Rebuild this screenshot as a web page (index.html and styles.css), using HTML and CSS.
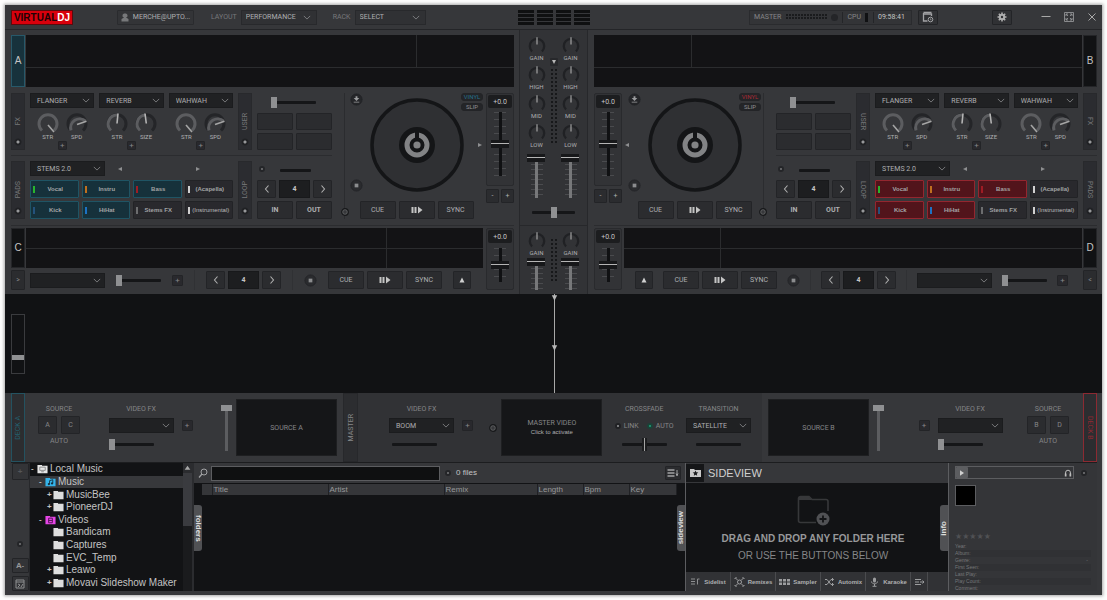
FILE: index.html
```html
<!DOCTYPE html>
<html lang="en">
<head>
<meta charset="utf-8">
<title>VirtualDJ</title>
<link rel="stylesheet" href="styles.css">
</head>
<body>
<svg class="defs" aria-hidden="true">
  <symbol id="chev" viewBox="0 0 10 6"><path d="M1 1l4 4 4-4" fill="none" stroke="#8d8e90" stroke-width="1"/></symbol>
  <symbol id="left" viewBox="0 0 6 10"><path d="M4.500 1.500L1.500 5l3 3.500" fill="none" stroke="#b0b0b0" stroke-width="1.100"/></symbol>
  <symbol id="right" viewBox="0 0 6 10"><path d="M1.500 1.500L4.500 5l-3 3.500" fill="none" stroke="#b0b0b0" stroke-width="1.100"/></symbol>
  <symbol id="play" viewBox="0 0 12 8"><path d="M0.500 1h2v6h-2zM3.500 1h2v6h-2zM7 0.500L11.500 4 7 7.500z" fill="#c4c4c4"/></symbol>
  <symbol id="up" viewBox="0 0 8 8"><path d="M4 1.500L6.500 6.500h-5z" fill="#d0d0d0"/></symbol>
  <symbol id="tri-l" viewBox="0 0 6 6"><path d="M5 1v4L1 3z" fill="#8e8f91"/></symbol>
  <symbol id="tri-r" viewBox="0 0 6 6"><path d="M1 1v4l4-2z" fill="#8e8f91"/></symbol>
  <symbol id="tri-d" viewBox="0 0 6 6"><path d="M1 1h4L3 5z" fill="#b8b8b8"/></symbol>
  <symbol id="stop" viewBox="0 0 14 14"><circle cx="7" cy="7" r="6" fill="#2a2b2e" stroke="#242528"/><path d="M5 5h4v4H5z" fill="#8b8c8e"/></symbol>
  <symbol id="load" viewBox="0 0 14 14"><circle cx="7" cy="7" r="6" fill="#252629" stroke="#222326"/><path d="M6 3.500h2v2h2L7 8.500 4 5.500h2zM4 9.300h6v1H4z" fill="#9b9c9e"/></symbol>
  <symbol id="ring" viewBox="0 0 8 8"><circle cx="4" cy="4" r="3" fill="#37383b" stroke="#17181a" stroke-width="1.800"/><circle cx="4" cy="4" r="2.300" fill="none" stroke="#77787a" stroke-width="0.700"/></symbol>
  <symbol id="k-max" viewBox="0 0 24 24"><path d="M6 18.500A9 9 0 1 1 18 18.500" fill="none" stroke="#5c5d60" stroke-width="3"/><path d="M12 13l6 7" stroke="#a5a5a5" stroke-width="1.600"/></symbol>
  <symbol id="k-spd" viewBox="0 0 24 24"><path d="M6 18.500A9 9 0 1 1 18 18.500" fill="none" stroke="#242528" stroke-width="3"/><path d="M6 18.500A9 9 0 0 1 20.600 9.200" fill="none" stroke="#5c5d60" stroke-width="3"/><path d="M12 12.500l9.500-3.200" stroke="#a5a5a5" stroke-width="1.600"/></symbol>
  <symbol id="k-mid" viewBox="0 0 24 24"><path d="M6 18.500A9 9 0 1 1 18 18.500" fill="none" stroke="#242528" stroke-width="3"/><path d="M6 18.500A9 9 0 0 1 12.700 3" fill="none" stroke="#5c5d60" stroke-width="3"/><path d="M12 11.500L13 1.500" stroke="#b5b5b5" stroke-width="1.600"/></symbol>
  <symbol id="k-siz" viewBox="0 0 24 24"><path d="M6 18.500A9 9 0 1 1 18 18.500" fill="none" stroke="#242528" stroke-width="3"/><path d="M6 18.500A9 9 0 0 1 11 3" fill="none" stroke="#5c5d60" stroke-width="3"/><path d="M12.300 11.500L11 1.500" stroke="#b5b5b5" stroke-width="1.600"/></symbol>
  <symbol id="k-mix" viewBox="0 0 20 20"><path d="M4.500 17A8 8 0 1 1 15.500 17" fill="none" stroke="#202124" stroke-width="2.600"/><path d="M10 1.500v8" stroke="#b0b0b0" stroke-width="1.200"/></symbol>
  <symbol id="jog" viewBox="0 0 94 94"><circle cx="47" cy="47" r="45" fill="#2f3033" stroke="#141517" stroke-width="3.500"/><circle cx="47" cy="47" r="18" fill="#141517"/><circle cx="47" cy="47" r="10" fill="none" stroke="#828385" stroke-width="5"/><path d="M45 33h4v9h-4z" fill="#141517"/><circle cx="47" cy="47" r="3.600" fill="#828385"/></symbol>
  <symbol id="folder" viewBox="0 0 12 10"><path d="M0.500 0.500h5v1h6v8h-11z" fill="#dedede"/></symbol>
</svg>

<div class="app">
<header class="top">
  <div class="top-left">
    <div class="logo">VIRTUAL<span>DJ</span></div>
    <button class="user"><svg width="8" height="9" viewBox="0 0 8 9"><path d="M4 0.500a2 2 0 0 1 1 4L7.500 6v2.500h-7V6L3 4.500a2 2 0 0 1 1-4z" fill="#77787a"/></svg>MERCHE@UPTO...</button>
    <label class="dim" for="layout">LAYOUT</label>
    <div class="sel top-sel"><select id="layout"><option>PERFORMANCE</option></select><svg><use href="#chev"/></svg></div>
    <label class="dim" for="rack">RACK</label>
    <div class="sel top-sel rack-sel"><select id="rack"><option>SELECT</option></select><svg><use href="#chev"/></svg></div>
  </div>
  <div class="leds"><i></i><i></i><i></i><i></i></div>
  <div class="top-right">
    <div class="status"><span>MASTER</span><i class="meter"></i><i class="knobdot"></i><i class="bar"></i><span>CPU</span><i class="cpu"></i><i class="bar"></i><time>09:58:41</time></div>
    <button class="tool" aria-label="Recorder"><svg width="12" height="12" viewBox="0 0 12 12"><path d="M1.500 3h8v2M1.500 2v8h4" fill="none" stroke="#a2a3a5" stroke-width="1.300"/><path d="M1.500 1.500h8" stroke="#a2a3a5" stroke-width="1.500"/><circle cx="8.500" cy="8.500" r="2.300" fill="none" stroke="#a2a3a5"/><path d="M8.500 7.500v1.300h1" stroke="#a2a3a5" stroke-width="0.700" fill="none"/></svg></button>
    <button class="tool gear" aria-label="Settings"><svg width="10" height="10" viewBox="0 0 10 10"><path d="M5 0.500v9M0.500 5h9M1.800 1.800l6.400 6.400M8.200 1.800L1.800 8.200" stroke="#adadad" stroke-width="1.600"/><circle cx="5" cy="5" r="3.200" fill="#adadad"/><circle cx="5" cy="5" r="1.200" fill="#303134"/></svg></button>
    <button class="win min" aria-label="Minimize"><svg width="10" height="10" viewBox="0 0 10 10"><path d="M0.500 4.500h9" stroke="#a8a8a8"/></svg></button>
    <button class="win" aria-label="Full screen"><svg width="10" height="10" viewBox="0 0 10 10"><path d="M0.500 0.500h9v9h-9zM2 2l2 2M8 2L6 4M2 8l2-2M8 8L6 6M2 4V2h2M6 2h2v2M2 6v2h2M6 8h2V6" fill="none" stroke="#929395" stroke-width="0.900"/></svg></button>
    <button class="win" aria-label="Close"><svg width="10" height="10" viewBox="0 0 10 10"><path d="M1.500 1.500l7 7M8.500 1.500l-7 7" stroke="#a8a8a8"/></svg></button>
  </div>
</header>

<main class="decks">
<section class="deck deck-l">
  <div class="wave-row"><b class="letter on">A</b><div class="wave wave-a"></div></div>
  <div class="mid">
    <div class="tools">
      <div class="tool-row">
        <div class="tab"><span>FX</span></div>
        <div class="fx-set">
          <div class="fx"><div class="sel"><select aria-label="FX 1"><option>FLANGER</option></select><svg><use href="#chev"/></svg></div><div class="knobs"><div class="knob"><svg><use href="#k-max"/></svg>STR</div><div class="knob"><svg><use href="#k-spd"/></svg>SPD</div></div><button class="plus">+</button></div>
          <div class="fx"><div class="sel"><select aria-label="FX 2"><option>REVERB</option></select><svg><use href="#chev"/></svg></div><div class="knobs"><div class="knob"><svg><use href="#k-mid"/></svg>STR</div><div class="knob"><svg><use href="#k-siz"/></svg>SIZE</div></div><button class="plus">+</button></div>
          <div class="fx"><div class="sel"><select aria-label="FX 3"><option>WAHWAH</option></select><svg><use href="#chev"/></svg></div><div class="knobs"><div class="knob"><svg><use href="#k-max"/></svg>STR</div><div class="knob"><svg><use href="#k-spd"/></svg>SPD</div></div><button class="plus">+</button></div>
        </div>
        <div class="tab"><span>USER</span></div>
        <div class="user-set"><input type="range" class="hr" value="0" aria-label="User slider"><div class="quad"><button aria-label="User 1"></button><button aria-label="User 2"></button><button aria-label="User 3"></button><button aria-label="User 4"></button></div></div>
      </div>
      <div class="tool-row">
        <div class="tab"><span>PADS</span></div>
        <div class="pad-set">
          <div class="pad-head"><div class="sel pad-sel"><select aria-label="Pads page"><option>STEMS 2.0</option></select><svg><use href="#chev"/></svg></div><button class="bare" aria-label="Previous page"><svg><use href="#tri-l"/></svg></button><button class="bare" aria-label="Next page"><svg><use href="#tri-r"/></svg></button></div>
          <div class="pads"><button class="on green">Vocal</button><button class="on orange">Instru</button><button class="on red">Bass</button><button class="white">(Acapella)</button><button class="on navy">Kick</button><button class="on blue">HiHat</button><button class="grey">Stems FX</button><button class="white long">(Instrumental)</button></div>
        </div>
        <div class="tab"><span>LOOP</span></div>
        <div class="loop-set"><div class="loop-head"><i class="dot"></i><input type="range" class="hr flat" aria-label="Loop position"></div>
          <div class="looper"><button aria-label="Halve loop"><svg><use href="#left"/></svg></button><output>4</output><button aria-label="Double loop"><svg><use href="#right"/></svg></button></div>
          <div class="inout"><button>IN</button><button>OUT</button></div></div>
      </div>
    </div>
    <div class="platter">
      <div class="jog-area">
        <svg class="jog"><use href="#jog"/></svg>
        <button class="bare round load" aria-label="Load"><svg><use href="#load"/></svg></button>
        <div class="modes"><button class="vinyl">VINYL</button><button>SLIP</button></div>
        <svg class="nudge"><use href="#tri-r"/></svg>
        <button class="bare round halt" aria-label="Stop"><svg><use href="#stop"/></svg></button>
      </div>
      <div class="transport"><button>CUE</button><button aria-label="Play"><svg><use href="#play"/></svg></button><button>SYNC</button></div>
      <svg class="pin"><use href="#ring"/></svg>
    </div>
    <div class="pitch">
      <div class="pitch-box"><output>+0.0</output><input type="range" class="vr" value="50" aria-label="Pitch A"></div>
      <div class="bend"><button>-</button><button>+</button></div>
    </div>
  </div>
  <div class="low">
    <div class="low-main">
      <div class="wave-row short"><b class="letter">C</b><div class="wave wave-c"></div></div>
      <div class="low-row">
        <div class="pair"><button class="edge">&gt;</button><div class="sel pad-sel"><select aria-label="Effect C"><option></option></select><svg><use href="#chev"/></svg></div></div>
        <input type="range" class="hr" value="0" aria-label="Effect amount C"><button class="plus">+</button><i class="sep"></i>
        <div class="looper"><button aria-label="Halve loop"><svg><use href="#left"/></svg></button><output>4</output><button aria-label="Double loop"><svg><use href="#right"/></svg></button></div><i class="sep"></i>
        <button class="bare round" aria-label="Stop"><svg><use href="#stop"/></svg></button>
        <div class="transport"><button>CUE</button><button aria-label="Play"><svg><use href="#play"/></svg></button><button>SYNC</button></div>
        <button class="eject" aria-label="Load"><svg><use href="#up"/></svg></button>
      </div>
    </div>
    <div class="pitch-box small"><output>+0.0</output><input type="range" class="vr" value="50" aria-label="Pitch C"></div>
  </div>
</section>

<section class="mixer">
  <div class="mix-top">
    <div class="channels">
      <div class="chan"><div class="knob"><svg><use href="#k-mix"/></svg>GAIN</div><div class="knob"><svg><use href="#k-mix"/></svg>HIGH</div><div class="knob"><svg><use href="#k-mix"/></svg>MID</div><div class="knob"><svg><use href="#k-mix"/></svg>LOW</div><input type="range" class="vr vol" value="100" aria-label="Volume A"></div>
      <div class="mid-vu"><button class="bare drop" aria-label="Mixer menu"><svg><use href="#tri-d"/></svg></button><i class="vu"></i></div>
      <div class="chan"><div class="knob"><svg><use href="#k-mix"/></svg>GAIN</div><div class="knob"><svg><use href="#k-mix"/></svg>HIGH</div><div class="knob"><svg><use href="#k-mix"/></svg>MID</div><div class="knob"><svg><use href="#k-mix"/></svg>LOW</div><input type="range" class="vr vol" value="100" aria-label="Volume B"></div>
    </div>
    <input type="range" class="hr cross" value="50" aria-label="Crossfader">
  </div>
  <div class="channels mix-low">
    <div class="chan"><div class="knob"><svg><use href="#k-mix"/></svg>GAIN</div><input type="range" class="vr vol" value="100" aria-label="Volume C"></div>
    <div class="mid-vu"><i class="vu"></i></div>
    <div class="chan"><div class="knob"><svg><use href="#k-mix"/></svg>GAIN</div><input type="range" class="vr vol" value="100" aria-label="Volume D"></div>
  </div>
</section>

<section class="deck deck-r">
  <div class="wave-row"><div class="wave wave-b"></div><b class="letter">B</b></div>
  <div class="mid">
    <div class="pitch">
      <div class="pitch-box"><output>+0.0</output><input type="range" class="vr" value="50" aria-label="Pitch B"></div>
      <div class="bend"><button>-</button><button>+</button></div>
    </div>
    <div class="platter">
      <div class="jog-area">
        <svg class="jog"><use href="#jog"/></svg>
        <button class="bare round load" aria-label="Load"><svg><use href="#load"/></svg></button>
        <div class="modes"><button class="vinyl">VINYL</button><button>SLIP</button></div>
        <svg class="nudge"><use href="#tri-l"/></svg>
        <button class="bare round halt" aria-label="Stop"><svg><use href="#stop"/></svg></button>
      </div>
      <div class="transport"><button>CUE</button><button aria-label="Play"><svg><use href="#play"/></svg></button><button>SYNC</button></div>
      <svg class="pin"><use href="#ring"/></svg>
    </div>
    <div class="tools">
      <div class="tool-row">
        <div class="user-set"><input type="range" class="hr" value="0" aria-label="User slider"><div class="quad"><button aria-label="User 1"></button><button aria-label="User 2"></button><button aria-label="User 3"></button><button aria-label="User 4"></button></div></div>
        <div class="tab"><span>USER</span></div>
        <div class="fx-set">
          <div class="fx"><div class="sel"><select aria-label="FX 1"><option>FLANGER</option></select><svg><use href="#chev"/></svg></div><div class="knobs"><div class="knob"><svg><use href="#k-max"/></svg>STR</div><div class="knob"><svg><use href="#k-spd"/></svg>SPD</div></div><button class="plus">+</button></div>
          <div class="fx"><div class="sel"><select aria-label="FX 2"><option>REVERB</option></select><svg><use href="#chev"/></svg></div><div class="knobs"><div class="knob"><svg><use href="#k-mid"/></svg>STR</div><div class="knob"><svg><use href="#k-siz"/></svg>SIZE</div></div><button class="plus">+</button></div>
          <div class="fx"><div class="sel"><select aria-label="FX 3"><option>WAHWAH</option></select><svg><use href="#chev"/></svg></div><div class="knobs"><div class="knob"><svg><use href="#k-max"/></svg>STR</div><div class="knob"><svg><use href="#k-spd"/></svg>SPD</div></div><button class="plus">+</button></div>
        </div>
        <div class="tab"><span>FX</span></div>
      </div>
      <div class="tool-row">
        <div class="loop-set"><div class="loop-head"><i class="dot"></i><input type="range" class="hr flat" aria-label="Loop position"></div>
          <div class="looper"><button aria-label="Halve loop"><svg><use href="#left"/></svg></button><output>4</output><button aria-label="Double loop"><svg><use href="#right"/></svg></button></div>
          <div class="inout"><button>IN</button><button>OUT</button></div></div>
        <div class="tab"><span>LOOP</span></div>
        <div class="pad-set">
          <div class="pad-head"><div class="sel pad-sel"><select aria-label="Pads page"><option>STEMS 2.0</option></select><svg><use href="#chev"/></svg></div><button class="bare" aria-label="Previous page"><svg><use href="#tri-l"/></svg></button><button class="bare" aria-label="Next page"><svg><use href="#tri-r"/></svg></button></div>
          <div class="pads"><button class="on green">Vocal</button><button class="on orange">Instru</button><button class="on red">Bass</button><button class="white">(Acapella)</button><button class="on navy">Kick</button><button class="on blue">HiHat</button><button class="grey">Stems FX</button><button class="white long">(Instrumental)</button></div>
        </div>
        <div class="tab"><span>PADS</span></div>
      </div>
    </div>
  </div>
  <div class="low">
    <div class="pitch-box small"><output>+0.0</output><input type="range" class="vr" value="50" aria-label="Pitch D"></div>
    <div class="low-main">
      <div class="wave-row short"><div class="wave wave-d"></div><b class="letter">D</b></div>
      <div class="low-row">
        <button class="eject" aria-label="Load"><svg><use href="#up"/></svg></button>
        <div class="transport"><button>CUE</button><button aria-label="Play"><svg><use href="#play"/></svg></button><button>SYNC</button></div>
        <button class="bare round" aria-label="Stop"><svg><use href="#stop"/></svg></button><i class="sep"></i>
        <div class="looper"><button aria-label="Halve loop"><svg><use href="#left"/></svg></button><output>4</output><button aria-label="Double loop"><svg><use href="#right"/></svg></button></div><i class="sep"></i>
        <div class="sel pad-sel"><select aria-label="Effect D"><option></option></select><svg><use href="#chev"/></svg></div>
        <input type="range" class="hr" value="0" aria-label="Effect amount D"><button class="plus">+</button>
        <button class="edge">&lt;</button>
      </div>
    </div>
  </div>
</section>
</main>

<section class="rhythm">
  <input type="range" class="zoomer" value="24" aria-label="Wave zoom">
  <div class="needle"><svg><use href="#tri-d"/></svg><svg><use href="#tri-d"/></svg></div>
</section>

<section class="video">
  <div class="side blue"><span>DECK A</span></div>
  <div class="v-deck">
    <div class="source"><span>SOURCE</span><div><button>A</button><button>C</button></div><span>AUTO</span></div>
    <div class="v-fx"><span>VIDEO FX</span><div class="v-line"><div class="sel"><select aria-label="Video FX A"><option></option></select><svg><use href="#chev"/></svg></div><button class="plus">+</button></div><input type="range" class="hr" value="0" aria-label="Video FX amount A"></div>
    <div class="screen-set"><input type="range" class="vr lvl" value="100" aria-label="Video level A"><div class="screen">SOURCE A</div></div>
  </div>
  <div class="side"><span>MASTER</span></div>
  <div class="v-master">
    <div class="v-fx"><span>VIDEO FX</span><div class="v-line"><div class="sel"><select aria-label="Master video FX"><option>BOOM</option></select><svg><use href="#chev"/></svg></div><button class="plus">+</button></div><input type="range" class="hr flat" aria-label="Master video FX amount"></div>
    <div class="screen-set"><svg class="ring"><use href="#ring"/></svg><div class="screen">MASTER VIDEO<small>Click to activate</small></div></div>
    <div class="v-cross"><span>CROSSFADE</span><div class="flags"><label><input type="checkbox">LINK</label><label><input type="checkbox" checked>AUTO</label></div><input type="range" class="hr slim" value="50" aria-label="Video crossfader"></div>
    <div class="v-cross"><span>TRANSITION</span><div class="sel"><select aria-label="Transition"><option>SATELLITE</option></select><svg><use href="#chev"/></svg></div><input type="range" class="hr flat" aria-label="Transition amount"></div>
  </div>
  <div class="v-deck">
    <div class="screen-set"><div class="screen">SOURCE B</div><input type="range" class="vr lvl" value="100" aria-label="Video level B"></div>
    <div class="v-fx mirror"><span>VIDEO FX</span><div class="v-line"><button class="plus">+</button><div class="sel"><select aria-label="Video FX B"><option></option></select><svg><use href="#chev"/></svg></div></div><input type="range" class="hr" value="0" aria-label="Video FX amount B"></div>
    <div class="source"><span>SOURCE</span><div><button>B</button><button>D</button></div><span>AUTO</span></div>
  </div>
  <div class="side red"><span>DECK B</span></div>
</section>

<section class="browser">
  <nav class="strip"><button class="add">+</button><i class="dot"></i><button>A<small>-</small></button><button aria-label="Browser options"><svg width="10" height="10" viewBox="0 0 10 10"><path d="M1 1h8v8H1zM1 3h8M3 5l2 1-2 2M8 5L6 8" fill="none" stroke="#8e8f91"/></svg></button></nav>
  <div class="tree-box">
    <ul class="tree">
      <li><i>-</i><svg viewBox="0 0 12 10"><path d="M0.500 0.500h5v1h6v8h-11z" fill="#e6e6e6"/><path d="M3 3h6v3.500H3zM4.500 8h3" fill="none" stroke="#8a8a8a"/></svg>Local Music</li>
      <li class="l2 picked"><i>-</i><svg viewBox="0 0 12 10"><path d="M0.500 0.500h5v1h6v8h-11z" fill="#35b4ea"/><path d="M5 7.500V3.500l3.500-1v4" fill="none" stroke="#14303e"/><circle cx="4.200" cy="7.300" r="1.200" fill="#14303e"/><circle cx="7.700" cy="6.500" r="1.200" fill="#14303e"/></svg>Music</li>
      <li class="l3"><i>+</i><svg><use href="#folder"/></svg>MusicBee</li>
      <li class="l3"><i>+</i><svg><use href="#folder"/></svg>PioneerDJ</li>
      <li class="l2"><i>-</i><svg viewBox="0 0 12 10"><path d="M0.500 0.500h5v1h6v8h-11z" fill="#e646e6"/><path d="M4 3v5M8 3v5M4 5.500h4M4 3h4M4 8h4" stroke="#4c104c" fill="none"/></svg>Videos</li>
      <li class="l3"><i></i><svg><use href="#folder"/></svg>Bandicam</li>
      <li class="l3"><i></i><svg><use href="#folder"/></svg>Captures</li>
      <li class="l3"><i></i><svg><use href="#folder"/></svg>EVC_Temp</li>
      <li class="l3"><i>+</i><svg><use href="#folder"/></svg>Leawo</li>
      <li class="l3"><i>+</i><svg><use href="#folder"/></svg>Movavi Slideshow Maker</li>
      <li class="l3"><i></i><svg><use href="#folder"/></svg></li>
    </ul>
    <div class="scroll"><svg viewBox="0 0 8 8"><path d="M4 2l2.500 3.500h-5z" fill="#a8a8a8"/></svg><i></i><svg viewBox="0 0 8 8"><path d="M4 6L1.500 2.500h5z" fill="#a8a8a8"/></svg></div>
  </div>
  <div class="files">
    <div class="search"><svg class="lens" viewBox="0 0 10 10"><circle cx="6" cy="4" r="3" fill="none" stroke="#a2a3a5"/><path d="M4 6L1 9.500" stroke="#a2a3a5" stroke-width="1.200"/></svg><input type="text" aria-label="Search"><i class="dot"></i><span>0 files</span><button aria-label="List options"><svg width="12" height="8" viewBox="0 0 12 8"><path d="M0.500 1h7M0.500 4h7M0.500 7h7" stroke="#a2a3a5" stroke-width="1.300"/><path d="M10 1v6M9 4.500l1 2 1-2" fill="none" stroke="#a2a3a5"/></svg></button></div>
    <div class="list">
      <button class="handle h-left"><span>folders</span></button>
      <table><thead><tr><th class="c0"></th><th class="c1">Title</th><th class="c2">Artist</th><th class="c3">Remix</th><th class="c4">Length</th><th class="c4">Bpm</th><th class="c5">Key</th></tr></thead></table>
      <button class="handle h-right"><span>sideview</span></button>
    </div>
  </div>
  <div class="sideview">
    <div class="sv-head"><span class="sv-icon"><svg width="11" height="10" viewBox="0 0 11 10"><path d="M0 1h4l1 1h6v7H0z" fill="#c8c8c8"/><path d="M5.500 2.500l.8 1.800 2 .2-1.500 1.300.4 1.900-1.700-1-1.700 1 .4-1.900L2.700 4.500l2-.2z" fill="#1a1b1d"/></svg></span>SIDEVIEW</div>
    <div class="drop-zone">
      <svg width="33" height="31" viewBox="0 0 33 31"><path d="M19 27.500H3.500a2 2 0 0 1-2-2v-22a2 2 0 0 1 2-2H12l3 3h14a2 2 0 0 1 2 2V16" fill="none" stroke="#37383a" stroke-width="1.600"/><path d="M2 2h10l3 3H2z" fill="#37383a"/><circle cx="26" cy="24" r="6.500" fill="#505154"/><path d="M26 20.500v7M22.500 24h7" stroke="#131416" stroke-width="1.800"/></svg>
      <strong>DRAG AND DROP ANY FOLDER HERE</strong><span>OR USE THE BUTTONS BELOW</span>
      <button class="handle h-right"><span>info</span></button>
    </div>
    <div class="sv-tabs">
      <button><svg viewBox="0 0 10 10"><path d="M0.500 2h4M0.500 4.500h4M0.500 7h4M7 7.500V2h2" fill="none" stroke="#8e8f91"/></svg>Sidelist</button>
      <button><svg viewBox="0 0 10 10"><circle cx="5" cy="5" r="2" fill="none" stroke="#9c9d9f"/><path d="M3.500 3.500L1 1M6.500 3.500L9 1M3.500 6.500L1 9M6.500 6.500L9 9M0 2l2-2M8 0l2 2M0 8l2 2M8 10l2-2" stroke="#9c9d9f" fill="none"/></svg>Remixes</button>
      <button><svg viewBox="0 0 11 10"><path d="M0 2h3v2.500H0zM4 2h3v2.500H4zM8 2h3v2.500H8zM0 5.500h3V8H0zM4 5.500h3V8H4zM8 5.500h3V8H8z" fill="#9c9d9f"/></svg>Sampler</button>
      <button><svg viewBox="0 0 10 10"><path d="M0.500 2.500h2l4 5h2.500M0.500 7.500h2l4-5h2.500M7.500 1l1.500 1.500L7.500 4M7.500 6L9 7.500 7.500 9" fill="none" stroke="#9c9d9f"/></svg>Automix</button>
      <button><svg viewBox="0 0 10 10"><rect x="3.500" y="0.500" width="3" height="5" rx="1.500" fill="#9c9d9f"/><path d="M2 4.500c0 3 6 3 6 0M5 7v2M3 9.300h4" fill="none" stroke="#9c9d9f"/></svg>Karaoke</button>
      <button class="more" aria-label="More"><svg viewBox="0 0 10 10"><path d="M0.500 2.500h6M0.500 5h4M0.500 7.500h6M5.500 5h4M8 3.500L9.500 5 8 6.500" fill="none" stroke="#9c9d9f"/></svg></button>
    </div>
  </div>
  <aside class="info">
    <div class="prelisten"><div class="player"><button aria-label="Prelisten"><svg viewBox="0 0 6 6"><path d="M1.500 1v4l3-2z" fill="#d0d0d0"/></svg></button><svg class="phones" viewBox="0 0 8 8"><path d="M1.500 5.500V4a2.500 2.800 0 0 1 5 0v1.500" fill="none" stroke="#bcbcbc"/><path d="M0.800 4.500h1.700V7.500H0.800zM5.500 4.500h1.700V7.500H5.500z" fill="#bcbcbc"/></svg></div><i class="dot"></i></div>
    <div class="cover"></div>
    <div class="stars">★★★★★</div>
    <ul><li>Year:</li><li>Album:</li><li>Genre:<span>-</span></li><li>First Seen:</li><li>Last Play:</li><li>Play Count:</li><li>Comment:</li></ul>
  </aside>
</section>
</div>
</body>
</html>
```
FILE: styles.css
```css
* { box-sizing: border-box; }

body {
  margin: 0;
  background: #fdfdfd;
  font: 7px/8px Roboto, "Liberation Sans", sans-serif;
  color: #aeafb1;
}

button, select, input { font: inherit; color: inherit; margin: 0; border-radius: 0; }
button { padding: 0; background: #2b2c2f; border: 1px solid #232427; display: flex; align-items: center; justify-content: center; border-radius: 1px; }
svg { display: block; }
.defs { display: none; }

.app {
  margin: 5px;
  min-height: calc(100vh - 10px);
  background: #36373a;
  box-shadow: 0 0 3px 1px #a5a5a5;
  display: flex;
  flex-direction: column;
}

/* shared controls */
.bare { background: none; border: 0; }
.bare svg { width: 6px; height: 6px; }
.round svg { width: 13px; height: 13px; }

.sel { display: grid; height: 15px; background: #202123; border: 1px solid #1b1c1e; align-items: center; min-width: 0; }
.sel > * { grid-area: 1 / 1; }
.sel select { appearance: none; background: none; border: 0; width: 100%; height: 13px; padding: 0 18px 0 6px; outline: 0; }
.sel svg { width: 8px; height: 5px; justify-self: end; margin-right: 3px; pointer-events: none; }

.dot { width: 6px; height: 6px; border-radius: 50%; border: 2px solid #242528; background: #77787a; flex: none; }
.plus { width: 11px; height: 11px; background: #29292d; color: #858688; font-size: 8px; line-height: 9px; flex: none; }

.hr { appearance: none; background: none; width: 45px; height: 12px; flex: none; }
.hr::-webkit-slider-runnable-track { height: 3px; background: #151618; border-radius: 1px; }
.hr::-webkit-slider-thumb { appearance: none; width: 6px; height: 11px; margin-top: -4px; background: #8f9092; }
.flat::-webkit-slider-thumb { opacity: 0; }
.slim::-webkit-slider-thumb { width: 5px; height: 13px; margin-top: -5px; background: linear-gradient(90deg, #1c1d1f 2px, #a5a5a5 2px, #a5a5a5 3px, #1c1d1f 3px); }

.vr {
  appearance: none;
  writing-mode: vertical-lr;
  direction: rtl;
  width: 18px;
  height: 64px;
  background: repeating-linear-gradient(#4a4b4e 0 1px, transparent 1px 7px) center / 12px 100% no-repeat;
}
.vr::-webkit-slider-runnable-track { width: 3px; background: #101113; }
.vr::-webkit-slider-thumb { appearance: none; width: 18px; height: 8px; margin-left: -8px; background: linear-gradient(#17181a 3px, #b5b5b5 3px, #b5b5b5 4px, #17181a 4px); }

/* title bar */
.top { display: grid; grid-template-columns: 1fr 72px 1fr; align-items: center; height: 25px; border-bottom: 1px solid #242528; padding: 0 5px 0 6px; }
.top-left, .top-right { display: flex; align-items: center; }
.top-right { justify-content: flex-end; }
.logo { width: 62px; height: 15px; background: #d8000c; border: 1px solid #5a0a0d; color: #1c0204; font: bold 10px/13px "Liberation Sans", sans-serif; text-align: center; white-space: nowrap; }
.logo span { color: #fff; }
.user { margin: 0 17px 0 44px; width: 77px; height: 15px; gap: 4px; background: #333437; border-color: #2a2b2e; white-space: nowrap; }
.dim { color: #77787a; }
.top-sel { width: 76px; margin: 0 16px 0 4px; background: #303134; border-color: #28292c; }
.top-sel select { padding-left: 4px; }
.top-sel svg { margin-right: 5px; }
.rack-sel { width: 71px; }
.leds { display: grid; grid-template-columns: repeat(4, 1fr); gap: 3px; height: 15px; }
.leds i { background: repeating-linear-gradient(#0f1011 0 3px, transparent 3px 4px); }
.status { display: flex; align-items: center; justify-content: space-between; width: 163px; height: 15px; padding: 0 6px 0 4px; border: 1px solid #2a2b2e; background: #333437; color: #858688; }
.status time { color: #c4c4c4; }
.meter { width: 41px; height: 6px; background: repeating-linear-gradient(90deg, transparent 0 2px, #333437 2px 3px), repeating-linear-gradient(#1a1b1d 0 2px, #333437 2px 3px); }
.knobdot { width: 7px; height: 7px; border-radius: 50%; background: #242528; }
.bar { width: 1px; height: 11px; background: #242528; }
.cpu { width: 3px; height: 9px; background: #101113; }
.tool { width: 20px; height: 15px; margin-left: 6px; background: #303134; }
.gear { margin-left: 54px; }
.win { width: 10px; height: 10px; background: none; border: 0; margin-left: 13px; }
.min { margin-left: 29px; }

/* decks */
.decks { display: grid; grid-template-columns: minmax(0, 1fr) 69px minmax(0, 1fr); }
.deck { display: flex; flex-direction: column; padding: 5px 5px 4px 6px; }
.wave-row { display: flex; gap: 1px; height: 52px; }
.short { height: 40px; }
.letter { width: 14px; background: #111214; border: 1px solid #242528; color: #c4c4c4; font: 10px/12px "Liberation Sans", sans-serif; display: flex; align-items: center; justify-content: center; }
.letter.on { background: #17323c; border-color: #27596a; }
.wave { flex: 1; background-color: #131315; background-repeat: no-repeat; background-image: linear-gradient(#2b2c2e, #2b2c2e), linear-gradient(#2b2c2e, #2b2c2e); }
.wave-a { background-size: 100% 1px, 1px 32px; background-position: 0 32px, 80% 0; }
.wave-b { background-size: 100% 1px, 1px 32px; background-position: 0 32px, 20% 0; }
.wave-c { background-size: 100% 1px, 1px 100%; background-position: 0 20px, 79% 0; }
.wave-d { background-size: 100% 1px, 1px 100%; background-position: 0 20px, 21% 0; }

.mid { display: flex; margin-top: 6px; padding-bottom: 6px; border-bottom: 1px solid #2b2c2f; }
.tools { flex: 321 1 0; min-width: 0; }
.tool-row { display: grid; grid-template-columns: 14px minmax(0, 1fr) 14px 75px; gap: 5px; height: 57px; }
.deck-r .tool-row { grid-template-columns: 75px 14px minmax(0, 1fr) 14px; }
.tool-row + .tool-row { margin-top: 5px; padding-top: 5px; border-top: 1px solid #2b2c2f; height: 64px; }

.tab { background: radial-gradient(circle at 50% calc(100% - 7px), #97989a 0 1px, #202124 2px 3px, transparent 4px) #2b2c30; border: 1px solid #28292c; color: #77787a; display: flex; align-items: center; justify-content: center; }
.tab span, .side span { writing-mode: vertical-rl; transform: rotate(180deg); }
.deck-r .tab span, .side.red span { transform: none; }

.fx-set { display: grid; grid-template-columns: repeat(3, minmax(0, 1fr)); gap: 5px; }
.fx { display: flex; flex-direction: column; }
.fx .plus { align-self: center; margin-top: 1px; width: 9px; height: 9px; line-height: 7px; }
.knobs { display: flex; justify-content: center; gap: 5px; margin-top: 4px; }
.knob { display: flex; flex-direction: column; align-items: center; width: 24px; font-size: 6px; line-height: 7px; }
.knob svg { width: 24px; height: 24px; margin-bottom: -3px; }

.user-set { display: flex; flex-direction: column; justify-content: space-between; }
.user-set .hr { margin: 3px 0 0 14px; }
.quad { display: grid; grid-template-columns: 1fr 1fr; grid-auto-rows: 17px; gap: 3px; }

.pad-set, .loop-set { display: flex; flex-direction: column; justify-content: space-between; }
.pad-head { display: flex; align-items: center; gap: 12px; }
.pad-sel { width: 75px; flex: none; }
.pad-head .bare + .bare { margin-left: 60px; }
.pads { display: grid; grid-template-columns: repeat(4, minmax(0, 1fr)); grid-auto-rows: 18px; gap: 3px; font: bold 6px/8px "Liberation Sans", sans-serif; color: #a2a3a5; }
.pads button { background: linear-gradient(var(--tone), var(--tone)) 2px 50% / 2px 7px no-repeat #29292d; border-color: #222326; padding-left: 2px; white-space: nowrap; }
.pads .long { font-weight: normal; padding-left: 4px; color: #bcbcbc; }
.pads .on { background-color: #16313b; border-color: #1f5464; }
.deck-r .pads .on { background-color: #52141b; border-color: #94262f; }
.green { --tone: #27b52e; }
.orange { --tone: #c0701f; }
.red { --tone: #a01c24; }
.white { --tone: #d0d0d0; }
.navy { --tone: #24527c; }
.blue { --tone: #1d72c4; }
.grey { --tone: #6c6d6f; }

.loop-head { display: flex; align-items: center; gap: 15px; height: 15px; padding-left: 2px; }
.loop-head .hr { width: 31px; margin-top: 4px; }
.looper { display: grid; grid-template-columns: 19px 31px 19px; gap: 3px; height: 18px; flex: none; }
.looper svg { width: 6px; height: 10px; }
.looper output { background: #1d1e20; border: 1px solid #18191b; display: flex; align-items: center; justify-content: center; font-weight: bold; color: #c4c4c4; }
.inout { display: grid; grid-template-columns: 1fr 1fr; gap: 3px; height: 18px; font-weight: bold; }

.platter { position: relative; flex: 133 1 9px; margin-left: 12px; border-left: 1px solid #2b2c2f; padding: 0 3px 0 5px; display: flex; flex-direction: column; justify-content: space-between; }
.deck-r .platter { margin: 0 12px 0 0; border: 0; border-right: 1px solid #2b2c2f; padding: 0 2px 0 6px; }
.jog-area { display: grid; grid-template-columns: 13px 1fr 22px; grid-template-rows: 1fr 1fr 1fr; height: 104px; }
.jog { grid-area: 1 / 1 / 4 / 4; place-self: center; width: 94px; height: 94px; }
.load { grid-area: 1 / 1; place-self: start; }
.modes { grid-area: 1 / 3; display: flex; flex-direction: column; gap: 2px; font-size: 6px; line-height: 6px; }
.modes button { height: 8px; border-radius: 3px; color: #8e8f91; background: #242528; }
.modes .vinyl { color: #24708a; }
.deck-r .modes .vinyl { color: #a82a36; }
.nudge { grid-area: 2 / 3; place-self: center end; width: 6px; height: 6px; }
.deck-r .nudge { grid-area: 2 / 1; justify-self: start; margin-left: -4px; }
.halt { grid-area: 3 / 1; align-self: end; margin-bottom: 5px; }
.transport { display: grid; grid-template-columns: repeat(3, 36px); gap: 3px; height: 18px; justify-content: center; flex: none; }
.transport svg { width: 12px; height: 8px; }
.pin { position: absolute; left: -4px; bottom: 3px; width: 8px; height: 8px; }
.deck-r .pin { left: auto; right: -4px; }

.pitch { width: 28px; display: flex; flex-direction: column; gap: 3px; }
.pitch-box { height: 93px; width: 28px; padding: 1px; border: 1px solid #292a2d; border-radius: 2px; background: #323336; display: flex; flex-direction: column; align-items: center; justify-content: space-between; flex: none; }
.pitch-box output { width: 100%; height: 13px; background: #1c1d1f; border-radius: 2px; display: flex; align-items: center; justify-content: center; color: #c4c4c4; }
.pitch-box .vr { margin-bottom: 8px; }
.bend { display: grid; grid-template-columns: 1fr 1fr; gap: 2px; height: 14px; }

.low { display: flex; gap: 3px; padding-top: 2px; }
.deck-r .low { gap: 2px; }
.low-main { flex: 1; min-width: 0; }
.small { height: 62px; width: 28px; }
.small .vr { height: 34px; margin-bottom: 6px; }
.low-row { display: flex; align-items: center; gap: 11px; margin-top: 2px; height: 20px; }
.deck-r .low-row { padding-left: 11px; gap: 10px; }
.pair { display: flex; align-items: center; gap: 5px; }
.edge { width: 14px; height: 20px; color: #858688; flex: none; }
.deck-r .edge { margin-left: auto; }
.sep { width: 1px; height: 20px; background: #303134; }
.eject { width: 18px; height: 18px; flex: none; }
.eject svg { width: 8px; height: 8px; }

/* mixer */
.mixer { display: flex; flex-direction: column; justify-content: space-between; background: #323336; border: solid #27282b; border-width: 0 1px; }
.mix-top { display: flex; flex-direction: column; align-items: center; gap: 8px; padding-top: 6px; }
.channels { display: grid; grid-template-columns: 28px 6px 28px; justify-content: center; }
.chan { display: flex; flex-direction: column; align-items: center; gap: 3px; }
.chan .knob { line-height: 8px; }
.chan .knob svg { width: 18px; height: 18px; margin: 0; }
.vol { height: 44px; background: repeating-linear-gradient(#4a4b4e 0 1px, transparent 1px 5px) center / 12px 100% no-repeat; }
.mix-top .vol { margin-top: 2px; }
.vol::-webkit-slider-runnable-track { background: #77787a; width: 3px; }
.mid-vu { display: flex; flex-direction: column; align-items: center; gap: 3px; padding-top: 22px; }
.drop { width: 8px; height: 8px; background: #27282b; }
.vu { width: 6px; height: 75px; background: linear-gradient(90deg, transparent 2px, #323336 2px, #323336 4px, transparent 4px), repeating-linear-gradient(#17181a 0 2px, transparent 2px 4px); }
.cross { width: 43px; }
.mix-low { border-top: 1px solid #27282b; padding-top: 5px; height: 69px; }
.mix-low .chan { gap: 1px; }
.mix-low .mid-vu { padding-top: 8px; }
.mix-low .vu { height: 44px; }
.mix-low .vol { height: 32px; }

/* rhythm wave */
.rhythm { flex: 1 0 99px; background: #111214; position: relative; display: flex; align-items: center; padding-left: 6px; }
.zoomer { appearance: none; writing-mode: vertical-lr; direction: rtl; width: 14px; height: 60px; background: none; border: 1px solid #3a3b3e; }
.zoomer::-webkit-slider-thumb { appearance: none; width: 12px; height: 5px; background: #8f9092; }
.needle { position: absolute; left: 50%; top: 0; bottom: 0; width: 9px; margin-left: -4px; display: grid; grid-template-rows: 1fr 1fr; justify-items: center; background: linear-gradient(#a8a8a8, #a8a8a8) center / 1px 100% no-repeat; }
.needle svg { width: 9px; height: 8px; }

/* video */
.video { display: grid; grid-template-columns: 14px minmax(0, 318fr) 15px minmax(0, 404fr) minmax(0, 321fr) 14px; padding: 0 5px 0 6px; height: 69px; color: #858688; }
.side { background: #2c2d30; border: 1px solid #27282b; display: flex; align-items: center; justify-content: center; }
.side.blue { border-color: #245260; color: #24606f; }
.side.red { border-color: #8c2a32; color: #8c2a32; }
.v-deck, .v-master { display: flex; justify-content: space-between; align-items: center; padding: 0 6px 0 13px; }
.side + .v-master { padding: 0 11px 0 31px; background: #313235; }
.v-master + .v-deck { padding: 0 14px 0 6px; }
.source { display: flex; flex-direction: column; align-items: center; gap: 3px; margin-bottom: 5px; }
.source div { display: flex; gap: 4px; }
.source button { width: 19px; height: 18px; }
.v-fx { display: grid; gap: 5px; grid-template-columns: 65px 11px; column-gap: 8px; }
.v-fx.mirror { grid-template-columns: 11px 65px; margin-left: 10px; }
.v-fx > span { grid-column: 1; text-align: center; }
.v-fx.mirror > span, .v-fx.mirror .hr { grid-column: 2; }
.v-line { grid-column: 1 / 3; display: grid; grid-template-columns: subgrid; align-items: center; }
.v-master .v-fx .hr { margin-left: 3px; }
.screen-set { display: flex; align-items: center; gap: 4px; }
.v-master .screen-set { margin-left: 4px; }
.screen { width: 101px; height: 57px; background: #151618; border: 1px solid #1e1f21; display: flex; flex-direction: column; align-items: center; justify-content: center; gap: 2px; }
.screen small { font: 6px/7px "Liberation Sans", sans-serif; color: #aeafb1; }
.lvl { width: 11px; height: 46px; background: none; }
.lvl::-webkit-slider-runnable-track { background: #5c5d60; }
.lvl::-webkit-slider-thumb { width: 11px; height: 6px; margin-left: -4px; background: #8f9092; }
.ring { width: 8px; height: 8px; }
.v-cross { display: grid; justify-items: center; gap: 5px; }
.v-cross .sel { width: 65px; }
.v-master .sel { color: #aeafb1; }
.flags { display: flex; gap: 8px; height: 15px; align-items: center; }
.flags label { display: flex; align-items: center; gap: 3px; }
.flags input { appearance: none; width: 6px; height: 6px; border-radius: 50%; border: 2px solid #202124; background: #97989a; }
.flags input:checked { background: #1fa37a; border-color: #1a4338; }

/* browser */
.browser { display: grid; grid-template-columns: 19px 164px minmax(0, 1fr) 263px 148px; height: 129px; margin: 0 5px 4px 6px; border-top: 1px solid #1c1d1f; font-family: "Liberation Sans", sans-serif; }
.strip { display: flex; flex-direction: column; align-items: center; gap: 3px; border-right: 1px solid #27282b; }
.strip button { width: 17px; height: 15px; background: #333437; font-weight: bold; font-size: 8px; color: #97989a; }
.strip .add { margin-bottom: auto; height: 17px; color: #555659; }
.strip .dot { margin-bottom: 8px; }
.tree-box { background: #121315; display: grid; grid-template-columns: minmax(0, 1fr) 9px; border-right: 2px solid #2b2c2f; height: 128px; overflow: hidden; }
.tree { margin: 0; padding: 0; list-style: none; display: grid; grid-template-rows: repeat(11, 1fr); height: 139px; font-size: 10px; line-height: 12px; color: #c4c4c4; white-space: nowrap; }
.tree li { display: flex; align-items: center; padding-left: 1px; }
.tree svg { width: 11px; height: 10px; margin-right: 2px; flex: none; }
.tree i { width: 6px; font: bold 8px/10px "Liberation Sans", sans-serif; }
.tree .l2 { padding-left: 9px; }
.tree .l3 { padding-left: 17px; }
.tree .picked { background: #37383b; }
.scroll { display: flex; flex-direction: column; background: #1a1b1d; }
.scroll svg { height: 10px; background: #2b2c2f; flex: none; }
.scroll i { height: 53px; background: #3a3b3f; margin-bottom: auto; }
.files { display: flex; flex-direction: column; background: #121315; border-right: 1px solid #5c5d60; }
.search { display: flex; align-items: center; height: 20px; background: #36373a; padding: 0 4px 0 4px; font-size: 8px; line-height: 10px; color: #c4c4c4; }
.lens { width: 10px; height: 10px; margin-right: 3px; }
.search input { flex: 0 1 229px; min-width: 0; height: 15px; background: #0f1011; border: 1px solid #5c5d60; }
.search .dot { margin: 0 5px 0 5px; }
.search button { margin-left: auto; width: 16px; height: 14px; background: #2b2c2f; }
.list { flex: 1; display: grid; grid-template-columns: 8px minmax(0, 1fr) 8px; align-items: start; padding-top: 1px; }
table { border-collapse: collapse; table-layout: fixed; width: 100%; background: #353639; font-size: 8px; line-height: 10px; color: #97989a; }
th { font-weight: normal; text-align: left; padding: 0 1px; height: 11px; border-right: 1px solid #202124; }
.c0 { width: 10px; } .c1 { width: 116px; } .c2 { width: 116px; } .c3 { width: 93px; } .c4 { width: 46px; }
.handle { width: 8px; height: 46px; background: #505154; border: 0; margin-top: 21px; font-size: 8px; font-weight: bold; line-height: 8px; color: #dedede; }
.handle span { writing-mode: vertical-rl; }
.h-left { border-radius: 0 3px 3px 0; }
.h-right { border-radius: 3px 0 0 3px; }
.h-right span { transform: rotate(180deg); }
.sideview { display: flex; flex-direction: column; background: #121315; border-right: 1px solid #5c5d60; }
.sv-head { display: flex; align-items: center; gap: 4px; height: 20px; background: #36373a; font-size: 11px; line-height: 12px; color: #d0d0d0; }
.sv-icon { width: 18px; height: 18px; background: #151618; display: flex; align-items: center; justify-content: center; }
.drop-zone { position: relative; flex: 1; display: flex; flex-direction: column; align-items: center; padding: 12px 8px 0 0; font-size: 10px; line-height: 12px; color: #858688; }
.drop-zone strong { margin: 7px 0 5px; color: #97989a; }
.drop-zone .handle { position: absolute; right: 0; top: 1px; }
.sv-tabs { display: flex; height: 19px; background: #313235; }
.sv-tabs button { width: 45px; gap: 3px; background: none; border: 0; border-right: 1px solid #4a4b4e; font-size: 6px; font-weight: bold; border-radius: 0; }
.sv-tabs svg { width: 11px; height: 10px; flex: none; }
.sv-tabs .more { width: 17px; }
.info { padding: 3px 6px 0; background: #343538; font-size: 5px; line-height: 7px; color: #77787a; overflow: hidden; }
.prelisten { display: flex; align-items: center; gap: 7px; }
.player { flex: 0 1 119px; height: 13px; border: 1px solid #5c5d60; display: flex; align-items: center; justify-content: space-between; }
.player button { width: 12px; height: 11px; background: #5c5d60; border: 0; }
.player button svg { width: 8px; height: 8px; }
.phones { width: 8px; height: 8px; margin-right: 1px; }
.cover { width: 21px; height: 21px; margin-top: 6px; background: #000; border: 1px solid #5c5d60; }
.stars { margin-top: 26px; font: 8px/10px "DejaVu Sans", sans-serif; color: #505154; }
.info ul { margin: 1px 0 0; padding: 0; list-style: none; }
.info li { display: flex; justify-content: space-between; padding-right: 3px; }
.info li:nth-child(even) { background: #303134; }
```
